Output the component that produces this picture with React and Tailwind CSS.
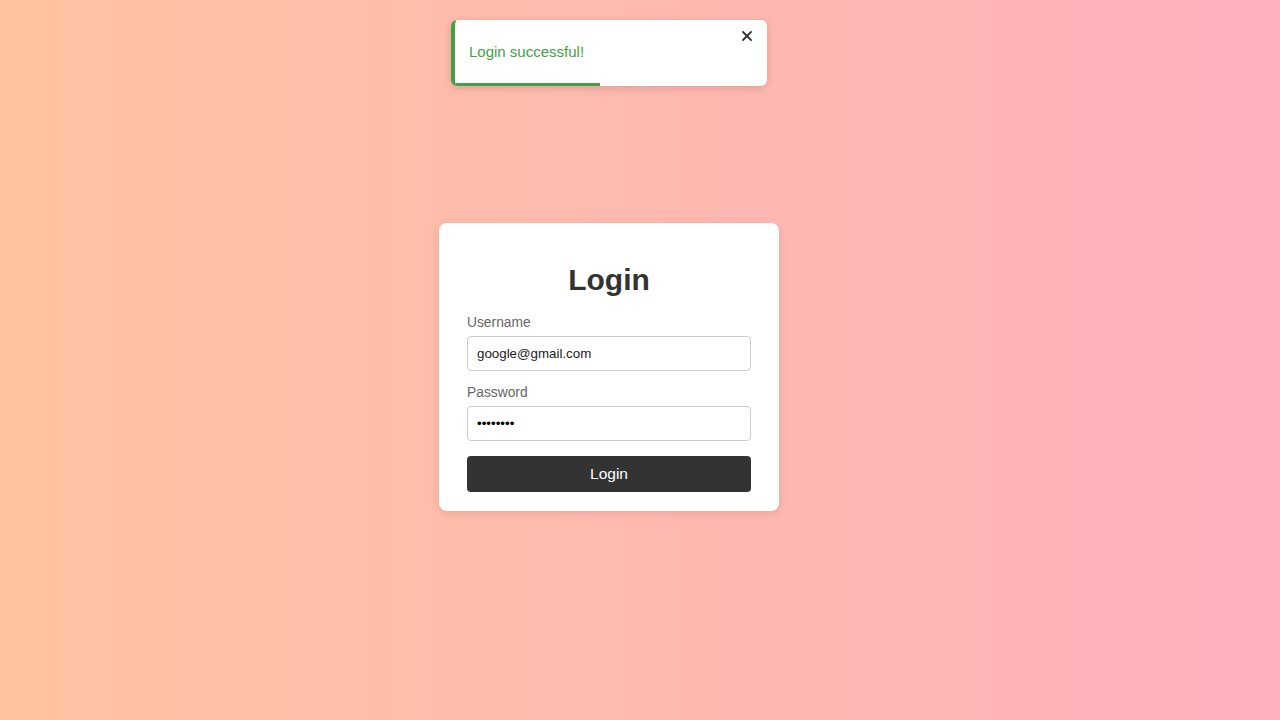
import React, { useState } from 'react';

const font = { fontFamily: '"Liberation Sans", Arial, sans-serif' };

// Toast shown after a successful login
const Toast = ({ message, onClose }) => (
    <div className="absolute top-5 left-[451px] w-[316px] h-[66px] bg-white rounded-md shadow-[0_2px_8px_rgba(0,0,0,0.15)] border-l-4 border-[#43a047] overflow-hidden">
        <div className="h-full flex items-center pl-[14px] pb-[2px]">
            <span className="text-[15px] text-[#43a047]">{message}</span>
        </div>
        <button onClick={onClose} className="absolute top-[10px] right-[14px] text-[#333] leading-none">
            <svg className="w-[12px] h-[12px]" viewBox="0 0 12 12" fill="none" stroke="currentColor" strokeWidth={1.8} strokeLinecap="round">
                <path d="M2 2l8 8M10 2l-8 8" />
            </svg>
        </button>
        <div className="absolute bottom-0 left-0 h-[3px] w-[145px] bg-[#43a047]"></div>
    </div>
);

const App = () => {
    const [username, setUsername] = useState('google@gmail.com');
    const [password, setPassword] = useState('password');
    const [showToast, setShowToast] = useState(true);

    return (
        <div className="relative min-h-screen w-full bg-gradient-to-r from-[#ffc3a0] to-[#ffafbd] flex justify-center pt-[223px] pr-[62px]" style={font}>
            {showToast && <Toast message="Login successful!" onClose={() => setShowToast(false)} />}

            {/* Login card */}
            <div className="w-[340px] h-[288px] bg-white rounded-lg shadow-[0_2px_10px_rgba(0,0,0,0.1)] px-7 pt-[42px]">
                <h1 className="text-center text-[30px] font-bold text-[#333] leading-none mb-[21px]">Login</h1>

                <label className="block text-[13.8px] text-[#666] leading-none mb-[6px]">Username</label>
                <input
                    type="text"
                    value={username}
                    onChange={e => setUsername(e.target.value)}
                    className="w-full h-[35px] border border-[#ccc] rounded px-[9px] text-[13.33px] text-[#222] outline-none mb-[15px]"
                />

                <label className="block text-[13.8px] text-[#666] leading-none mb-[6px]">Password</label>
                <input
                    type="password"
                    value={password}
                    onChange={e => setPassword(e.target.value)}
                    className="w-full h-[35px] border border-[#ccc] rounded px-[9px] text-[13.33px] text-black outline-none mb-[15px]"
                />

                <button className="w-full h-[36px] bg-[#333] text-white text-[15.5px] rounded">Login</button>
            </div>
        </div>
    );
};

export default App;
